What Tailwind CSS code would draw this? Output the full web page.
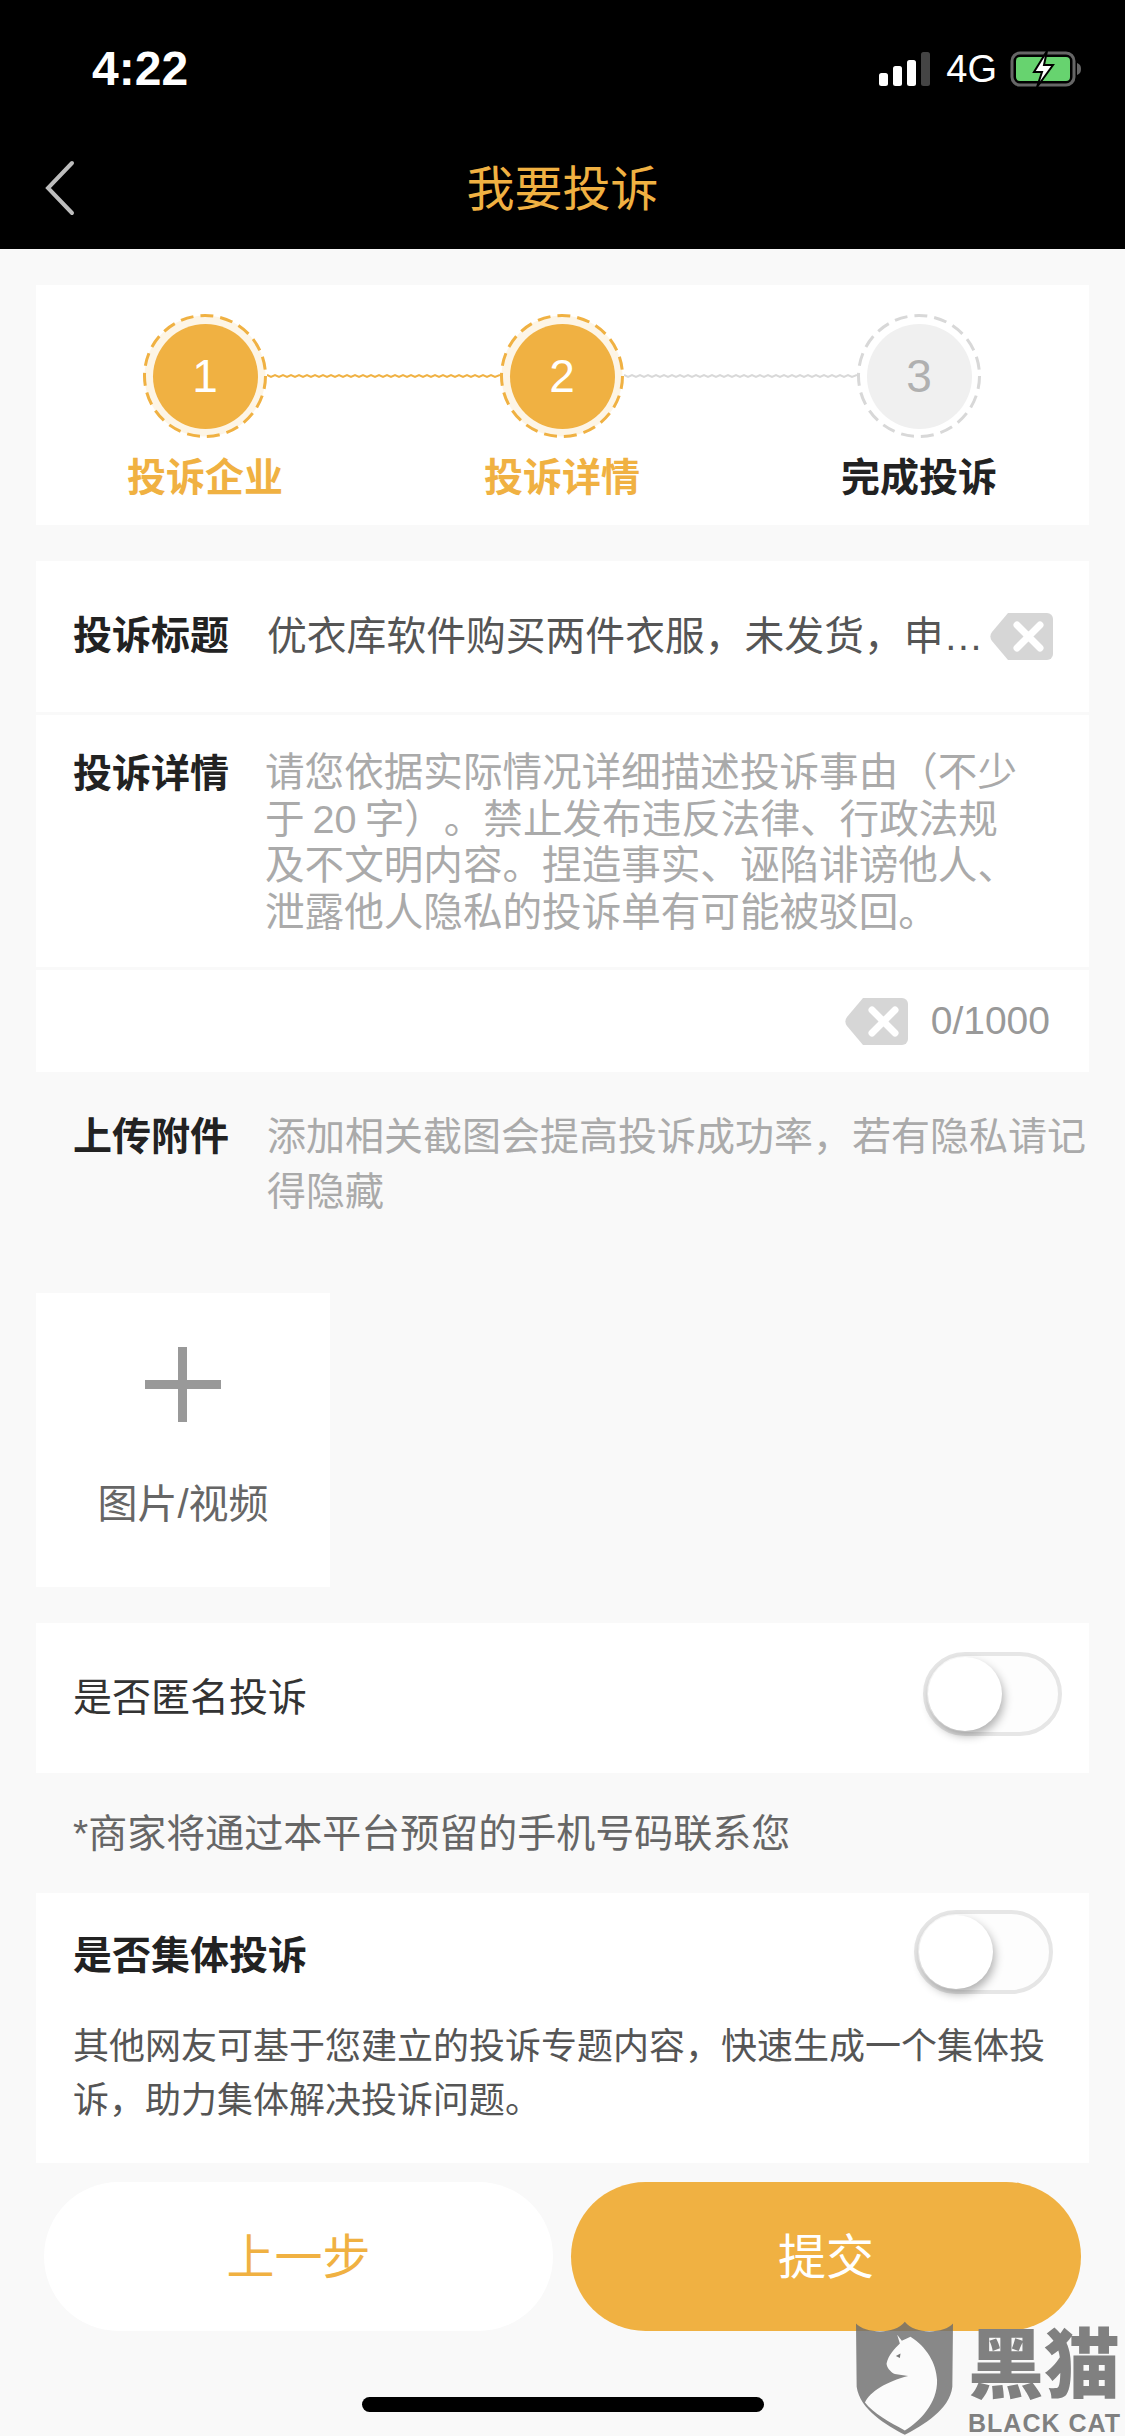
<!DOCTYPE html>
<html lang="zh-CN">
<head>
    <meta charset="UTF-8">
    <meta name="viewport" content="width=device-width, initial-scale=1.0">
    <title>我要投诉</title>
    <script src="https://cdn.jsdelivr.net/npm/@tailwindcss/browser@4"></script>
</head>
<body class="relative w-[1125px] h-[2436px] overflow-hidden bg-[#f9f9f9] font-['Liberation_Sans','Noto_Sans_CJK_SC',sans-serif] text-[39px] text-[#333]">
    <!-- 顶部 -->
    <header class="h-[249px] bg-black">
        <div class="flex items-center justify-between h-[138px] pl-[92px] pr-[42px]">
            <span class="text-[48px] font-bold text-white leading-none">4:22</span>
            <div class="flex items-center">
                <svg width="52" height="34" viewBox="0 0 52 34">
                    <rect x="0" y="21" width="9" height="13" rx="2.5" fill="#fff"/>
                    <rect x="14" y="14" width="9" height="20" rx="2.5" fill="#fff"/>
                    <rect x="28" y="8" width="9" height="26" rx="2.5" fill="#fff"/>
                    <rect x="42" y="0" width="9" height="34" rx="2.5" fill="#444"/>
                </svg>
                <span class="ml-[15px] text-[38px] text-white leading-none">4G</span>
                <svg class="ml-[12px]" width="74" height="36" viewBox="0 0 72 36">
                    <rect x="2" y="2" width="62" height="32" rx="8" fill="none" stroke="#666" stroke-width="3"/>
                    <rect x="6" y="6" width="54" height="24" rx="4" fill="#67d36f"/>
                    <path d="M67 12c3 1 4 3 4 6s-1 5-4 6z" fill="#666"/>
                    <path d="M37 0 L24 21 L32 21 L27 36 L43 14 L34 14 Z" fill="#fff" stroke="#000" stroke-width="2"/>
                </svg>
            </div>
        </div>
        <div class="relative flex items-center justify-center h-[100px]">
            <svg class="absolute left-[44px] top-[22px]" width="32" height="56" viewBox="0 0 32 56">
                <polyline points="28,3 4,28 28,53" fill="none" stroke="#bdbdbd" stroke-width="4" stroke-linecap="round"/>
            </svg>
            <h1 class="pt-[3px] text-[48px] text-[#f0b142] leading-none">我要投诉</h1>
        </div>
    </header>

    <main class="px-[36px]">
        <!-- 步骤 -->
        <section class="mt-[36px] h-[240px] bg-white pt-[29px]">
            <div class="flex items-center pl-[107px]">
                <div class="relative flex items-center justify-center w-[124px] h-[124px]">
                    <svg class="absolute inset-0" width="124" height="124" viewBox="0 0 124 124">
                        <circle cx="62" cy="62" r="60.5" fill="#fdf5e6" stroke="#f0b142" stroke-width="3" stroke-dasharray="13 7"/>
                    </svg>
                    <div class="relative flex items-center justify-center w-[105px] h-[105px] rounded-full bg-[#f0b142] text-[46px] text-white">1</div>
                </div>
                <svg width="233" height="8" viewBox="0 0 233 8">
                    <path d="M0 3 L4 5 L8 3 L12 5 L16 3 L20 5 L24 3 L28 5 L32 3 L36 5 L40 3 L44 5 L48 3 L52 5 L56 3 L60 5 L64 3 L68 5 L72 3 L76 5 L80 3 L84 5 L88 3 L92 5 L96 3 L100 5 L104 3 L108 5 L112 3 L116 5 L120 3 L124 5 L128 3 L132 5 L136 3 L140 5 L144 3 L148 5 L152 3 L156 5 L160 3 L164 5 L168 3 L172 5 L176 3 L180 5 L184 3 L188 5 L192 3 L196 5 L200 3 L204 5 L208 3 L212 5 L216 3 L220 5 L224 3 L228 5 L233 3" fill="none" stroke="#f0b142" stroke-width="2"/>
                </svg>
                <div class="relative flex items-center justify-center w-[124px] h-[124px]">
                    <svg class="absolute inset-0" width="124" height="124" viewBox="0 0 124 124">
                        <circle cx="62" cy="62" r="60.5" fill="#fdf5e6" stroke="#f0b142" stroke-width="3" stroke-dasharray="13 7"/>
                    </svg>
                    <div class="relative flex items-center justify-center w-[105px] h-[105px] rounded-full bg-[#f0b142] text-[46px] text-white">2</div>
                </div>
                <svg width="233" height="8" viewBox="0 0 233 8">
                    <path d="M0 3 L4 5 L8 3 L12 5 L16 3 L20 5 L24 3 L28 5 L32 3 L36 5 L40 3 L44 5 L48 3 L52 5 L56 3 L60 5 L64 3 L68 5 L72 3 L76 5 L80 3 L84 5 L88 3 L92 5 L96 3 L100 5 L104 3 L108 5 L112 3 L116 5 L120 3 L124 5 L128 3 L132 5 L136 3 L140 5 L144 3 L148 5 L152 3 L156 5 L160 3 L164 5 L168 3 L172 5 L176 3 L180 5 L184 3 L188 5 L192 3 L196 5 L200 3 L204 5 L208 3 L212 5 L216 3 L220 5 L224 3 L228 5 L233 3" fill="none" stroke="#d8d8d8" stroke-width="2"/>
                </svg>
                <div class="relative flex items-center justify-center w-[124px] h-[124px]">
                    <svg class="absolute inset-0" width="124" height="124" viewBox="0 0 124 124">
                        <circle cx="62" cy="62" r="60.5" fill="#fff" stroke="#d8d8d8" stroke-width="3" stroke-dasharray="13 7"/>
                    </svg>
                    <div class="relative flex items-center justify-center w-[105px] h-[105px] rounded-full bg-[#f0f0f0] text-[46px] text-[#b0b0b0]">3</div>
                </div>
            </div>
            <div class="flex gap-[117px] pl-[49px] mt-[15px] text-[39px] font-bold leading-[50px] text-center">
                <span class="w-[240px] text-[#f0b142]">投诉企业</span>
                <span class="w-[240px] text-[#f0b142]">投诉详情</span>
                <span class="w-[240px] text-[#222]">完成投诉</span>
            </div>
        </section>

        <!-- 投诉内容 -->
        <section class="mt-[36px] bg-white">
            <div class="flex items-center h-[151px] pl-[37px] pr-[36px]">
                <span class="w-[194px] shrink-0 font-bold text-[#222]">投诉标题</span>
                <span class="w-[716px] text-[39.8px] whitespace-nowrap text-[#555]">优衣库软件购买两件衣服，未发货，申…</span>
                <svg class="ml-[7px] shrink-0" width="63" height="47" viewBox="0 0 63 47">
                    <path d="M18 0 H57 a6 6 0 0 1 6 6 V41 a6 6 0 0 1 -6 6 H18 L2 28 a7 7 0 0 1 0 -9 Z" fill="#d6d6d6"/>
                    <path d="M27 12 L50 35 M50 12 L27 35" stroke="#fff" stroke-width="7" stroke-linecap="round"/>
                </svg>
            </div>
            <div class="flex h-[255px] pt-[34px] pl-[37px] border-t-[3px] border-[#f9f9f9]">
                <span class="w-[192px] shrink-0 font-bold text-[#222] leading-[50px]">投诉详情</span>
                <p class="w-[790px] text-[39.6px] text-[#aaa] leading-[46.5px] [text-spacing-trim:space-all]">请您依据实际情况详细描述投诉事由（不少<br>于<span class="mx-[8px]">20</span>字）。禁止发布违反法律、行政法规<br>及不文明内容。捏造事实、诬陷诽谤他人、<br>泄露他人隐私的投诉单有可能被驳回。</p>
            </div>
            <div class="flex items-center justify-end h-[105px] pr-[39px] border-t-[3px] border-[#f9f9f9]">
                <svg width="63" height="47" viewBox="0 0 63 47">
                    <path d="M18 0 H57 a6 6 0 0 1 6 6 V41 a6 6 0 0 1 -6 6 H18 L2 28 a7 7 0 0 1 0 -9 Z" fill="#d6d6d6"/>
                    <path d="M27 12 L50 35 M50 12 L27 35" stroke="#fff" stroke-width="7" stroke-linecap="round"/>
                </svg>
                <span class="ml-[23px] text-[#999]">0/1000</span>
            </div>
        </section>

        <!-- 上传附件 -->
        <section class="flex mt-[37px] pl-[37px]">
            <span class="w-[194px] shrink-0 font-bold text-[#222] leading-[55px]">上传附件</span>
            <p class="w-[822px] text-[#aaa] leading-[55px]">添加相关截图会提高投诉成功率，若有隐私请记得隐藏</p>
        </section>
        <button class="flex flex-col items-center w-[294px] h-[294px] mt-[74px] bg-white">
            <svg class="mt-[54px]" width="76" height="75" viewBox="0 0 76 75">
                <path d="M33 0 H42 V33 H76 V42 H42 V75 H33 V42 H0 V33 H33 Z" fill="#999"/>
            </svg>
            <span class="mt-[54px] text-[40px] text-[#666] leading-[56px]">图片/视频</span>
        </button>

        <!-- 开关 -->
        <section class="flex items-center justify-between h-[150px] mt-[36px] pl-[37px] pr-[27px] bg-white">
            <span class="text-[#333]">是否匿名投诉</span>
            <div class="w-[139px] h-[84px] mb-[8px] p-[1px] rounded-full border-[4px] border-[#e6e6e6] bg-[#fdfdfd]">
                <div class="w-[74px] h-[74px] rounded-full bg-white shadow-[2px_5px_10px_rgba(0,0,0,0.3)]"></div>
            </div>
        </section>
        <p class="flex items-center h-[120px] pt-[2px] pl-[37px] text-[#666]">*商家将通过本平台预留的手机号码联系您</p>
        <section class="h-[270px] pl-[37px] pr-[36px] bg-white">
            <div class="flex items-center justify-between h-[127px]">
                <span class="font-bold text-[#222]">是否集体投诉</span>
                <div class="w-[139px] h-[84px] mb-[10px] p-[1px] rounded-full border-[4px] border-[#e6e6e6] bg-[#fdfdfd]">
                    <div class="w-[74px] h-[74px] rounded-full bg-white shadow-[2px_5px_10px_rgba(0,0,0,0.3)]"></div>
                </div>
            </div>
            <p class="text-[36px] leading-[54px] text-[#555]">其他网友可基于您建立的投诉专题内容，快速生成一个集体投诉，助力集体解决投诉问题。</p>
        </section>

        <!-- 按钮 -->
        <div class="flex gap-[18px] mt-[19px] pl-[8px]">
            <button class="w-[509px] h-[149px] pt-[3px] rounded-full bg-white text-[48px] text-[#f0b142]">上一步</button>
            <button class="w-[510px] h-[149px] pt-[3px] rounded-full bg-[#f0b142] text-[48px] text-white">提交</button>
        </div>
    </main>

    <!-- Home 指示条 -->
    <div class="absolute left-[362px] top-[2397px] w-[402px] h-[15px] rounded-full bg-black"></div>

    <!-- 水印 -->
    <svg class="absolute left-[855px] top-[2320px]" width="99" height="116" viewBox="225 60 298 348">
        <path d="M228 70 C255 100 345 105 375 65 C405 105 495 100 520 70 L518 260 C510 330 430 375 375 405 C320 375 240 330 230 260 Z" fill="#6b6b6b" fill-opacity="0.8"/>
        <path d="M352 104 L366 122 L392 110 C440 140 470 190 472 240 C474 310 420 365 375 392 C330 368 280 340 255 308 C270 275 320 245 385 228 L345 222 C330 215 320 200 320 190 C325 165 345 145 360 130 Z" fill="#fbfbfb"/>
        <path d="M348 168 L362 160 L360 174 Z" fill="#777"/>
    </svg>
    <div class="absolute left-[968px] top-[2322px] w-[157px] text-[#808080]">
        <div class="text-[76px] font-black leading-[88px] whitespace-nowrap">黑猫</div>
        <div class="text-[25px] font-bold leading-[26px] tracking-[1px] whitespace-nowrap">BLACK CAT</div>
    </div>
</body>
</html>
